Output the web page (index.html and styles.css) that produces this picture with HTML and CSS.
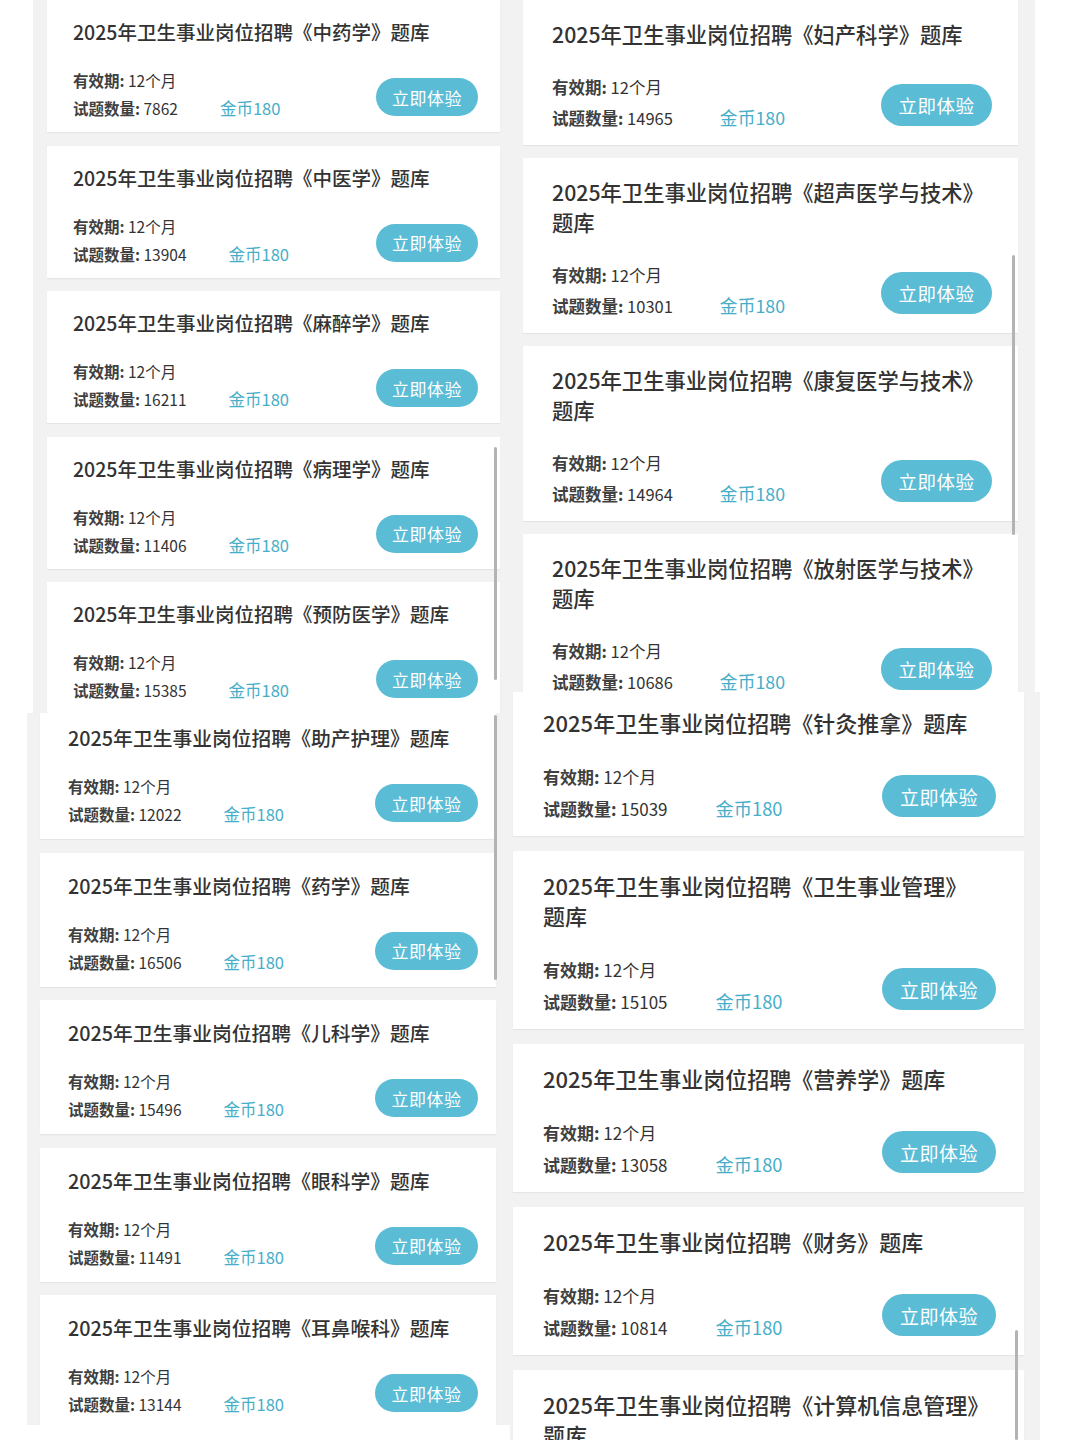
FILE: index.html
```html
<!DOCTYPE html>
<html lang="zh-CN">
<head>
<meta charset="utf-8">
<title>2025年卫生事业岗位招聘题库</title>
<link rel="stylesheet" href="styles.css">
</head>
<body>
<div class="collage">
  <div class="col col-left">
    <section class="panel panel-a">
      <div class="list">
        <div class="card">
          <div class="title">2025年卫生事业岗位招聘《中药学》<span class="keep">题库</span></div>
          <div class="body">
            <div class="meta">
              <div class="row"><span class="label">有效期:</span> 12个月</div>
              <div class="row"><span class="label">试题数量:</span> 7862<span class="coin">金币180</span></div>
            </div>
            <div class="btn">立即体验</div>
          </div>
        </div>
        <div class="card">
          <div class="title">2025年卫生事业岗位招聘《中医学》<span class="keep">题库</span></div>
          <div class="body">
            <div class="meta">
              <div class="row"><span class="label">有效期:</span> 12个月</div>
              <div class="row"><span class="label">试题数量:</span> 13904<span class="coin">金币180</span></div>
            </div>
            <div class="btn">立即体验</div>
          </div>
        </div>
        <div class="card">
          <div class="title">2025年卫生事业岗位招聘《麻醉学》<span class="keep">题库</span></div>
          <div class="body">
            <div class="meta">
              <div class="row"><span class="label">有效期:</span> 12个月</div>
              <div class="row"><span class="label">试题数量:</span> 16211<span class="coin">金币180</span></div>
            </div>
            <div class="btn">立即体验</div>
          </div>
        </div>
        <div class="card">
          <div class="title">2025年卫生事业岗位招聘《病理学》<span class="keep">题库</span></div>
          <div class="body">
            <div class="meta">
              <div class="row"><span class="label">有效期:</span> 12个月</div>
              <div class="row"><span class="label">试题数量:</span> 11406<span class="coin">金币180</span></div>
            </div>
            <div class="btn">立即体验</div>
          </div>
        </div>
        <div class="card">
          <div class="title">2025年卫生事业岗位招聘《预防医学》<span class="keep">题库</span></div>
          <div class="body">
            <div class="meta">
              <div class="row"><span class="label">有效期:</span> 12个月</div>
              <div class="row"><span class="label">试题数量:</span> 15385<span class="coin">金币180</span></div>
            </div>
            <div class="btn">立即体验</div>
          </div>
        </div>
      </div>
      <div class="scrollbar"></div>
    </section>

    <section class="panel panel-b">
      <div class="list">
        <div class="card">
          <div class="title">2025年卫生事业岗位招聘《助产护理》<span class="keep">题库</span></div>
          <div class="body">
            <div class="meta">
              <div class="row"><span class="label">有效期:</span> 12个月</div>
              <div class="row"><span class="label">试题数量:</span> 12022<span class="coin">金币180</span></div>
            </div>
            <div class="btn">立即体验</div>
          </div>
        </div>
        <div class="card">
          <div class="title">2025年卫生事业岗位招聘《药学》<span class="keep">题库</span></div>
          <div class="body">
            <div class="meta">
              <div class="row"><span class="label">有效期:</span> 12个月</div>
              <div class="row"><span class="label">试题数量:</span> 16506<span class="coin">金币180</span></div>
            </div>
            <div class="btn">立即体验</div>
          </div>
        </div>
        <div class="card">
          <div class="title">2025年卫生事业岗位招聘《儿科学》<span class="keep">题库</span></div>
          <div class="body">
            <div class="meta">
              <div class="row"><span class="label">有效期:</span> 12个月</div>
              <div class="row"><span class="label">试题数量:</span> 15496<span class="coin">金币180</span></div>
            </div>
            <div class="btn">立即体验</div>
          </div>
        </div>
        <div class="card">
          <div class="title">2025年卫生事业岗位招聘《眼科学》<span class="keep">题库</span></div>
          <div class="body">
            <div class="meta">
              <div class="row"><span class="label">有效期:</span> 12个月</div>
              <div class="row"><span class="label">试题数量:</span> 11491<span class="coin">金币180</span></div>
            </div>
            <div class="btn">立即体验</div>
          </div>
        </div>
        <div class="card">
          <div class="title">2025年卫生事业岗位招聘《耳鼻喉科》<span class="keep">题库</span></div>
          <div class="body">
            <div class="meta">
              <div class="row"><span class="label">有效期:</span> 12个月</div>
              <div class="row"><span class="label">试题数量:</span> 13144<span class="coin">金币180</span></div>
            </div>
            <div class="btn">立即体验</div>
          </div>
        </div>
      </div>
      <div class="scrollbar"></div>
    </section>
  </div>

  <div class="col col-right">
    <section class="panel panel-c">
      <div class="list">
        <div class="card">
          <div class="title">2025年卫生事业岗位招聘《妇产科学》<span class="keep">题库</span></div>
          <div class="body">
            <div class="meta">
              <div class="row"><span class="label">有效期:</span> 12个月</div>
              <div class="row"><span class="label">试题数量:</span> 14965<span class="coin">金币180</span></div>
            </div>
            <div class="btn">立即体验</div>
          </div>
        </div>
        <div class="card">
          <div class="title">2025年卫生事业岗位招聘《超声医学与技术》<span class="keep">题库</span></div>
          <div class="body">
            <div class="meta">
              <div class="row"><span class="label">有效期:</span> 12个月</div>
              <div class="row"><span class="label">试题数量:</span> 10301<span class="coin">金币180</span></div>
            </div>
            <div class="btn">立即体验</div>
          </div>
        </div>
        <div class="card">
          <div class="title">2025年卫生事业岗位招聘《康复医学与技术》<span class="keep">题库</span></div>
          <div class="body">
            <div class="meta">
              <div class="row"><span class="label">有效期:</span> 12个月</div>
              <div class="row"><span class="label">试题数量:</span> 14964<span class="coin">金币180</span></div>
            </div>
            <div class="btn">立即体验</div>
          </div>
        </div>
        <div class="card">
          <div class="title">2025年卫生事业岗位招聘《放射医学与技术》<span class="keep">题库</span></div>
          <div class="body">
            <div class="meta">
              <div class="row"><span class="label">有效期:</span> 12个月</div>
              <div class="row"><span class="label">试题数量:</span> 10686<span class="coin">金币180</span></div>
            </div>
            <div class="btn">立即体验</div>
          </div>
        </div>
      </div>
      <div class="scrollbar"></div>
    </section>

    <section class="panel panel-d">
      <div class="list">
        <div class="card">
          <div class="title">2025年卫生事业岗位招聘《针灸推拿》<span class="keep">题库</span></div>
          <div class="body">
            <div class="meta">
              <div class="row"><span class="label">有效期:</span> 12个月</div>
              <div class="row"><span class="label">试题数量:</span> 15039<span class="coin">金币180</span></div>
            </div>
            <div class="btn">立即体验</div>
          </div>
        </div>
        <div class="card">
          <div class="title">2025年卫生事业岗位招聘《卫生事业管理》<span class="keep">题库</span></div>
          <div class="body">
            <div class="meta">
              <div class="row"><span class="label">有效期:</span> 12个月</div>
              <div class="row"><span class="label">试题数量:</span> 15105<span class="coin">金币180</span></div>
            </div>
            <div class="btn">立即体验</div>
          </div>
        </div>
        <div class="card">
          <div class="title">2025年卫生事业岗位招聘《营养学》<span class="keep">题库</span></div>
          <div class="body">
            <div class="meta">
              <div class="row"><span class="label">有效期:</span> 12个月</div>
              <div class="row"><span class="label">试题数量:</span> 13058<span class="coin">金币180</span></div>
            </div>
            <div class="btn">立即体验</div>
          </div>
        </div>
        <div class="card">
          <div class="title">2025年卫生事业岗位招聘《财务》<span class="keep">题库</span></div>
          <div class="body">
            <div class="meta">
              <div class="row"><span class="label">有效期:</span> 12个月</div>
              <div class="row"><span class="label">试题数量:</span> 10814<span class="coin">金币180</span></div>
            </div>
            <div class="btn">立即体验</div>
          </div>
        </div>
        <div class="card">
          <div class="title">2025年卫生事业岗位招聘《计算机信息管理》<span class="keep">题库</span></div>
          <div class="body">
            <div class="meta">
              <div class="row"><span class="label">有效期:</span> 12个月</div>
              <div class="row"><span class="label">试题数量:</span> 12360<span class="coin">金币180</span></div>
            </div>
            <div class="btn">立即体验</div>
          </div>
        </div>
      </div>
      <div class="scrollbar"></div>
    </section>
  </div>
</div>
</body>
</html>
```

FILE: styles.css
```css
* { box-sizing: border-box; }

html, body {
  margin: 0;
  padding: 0;
  background: #ffffff;
}

body {
  font-family: "Noto Sans CJK SC", "Noto Sans", sans-serif;
  color: #333333;
}

.collage {
  width: 1080px;
  height: 1440px;
  display: flex;
  overflow: hidden;
}

.col {
  display: flex;
  flex-direction: column;
}

.col-left { width: 510px; }
.col-right { width: 570px; }

.panel {
  position: relative;
  overflow: hidden;
  background: #f2f2f2;
  flex-shrink: 0;
}

.list {
  display: flex;
  flex-direction: column;
}

.card {
  background: #ffffff;
  box-shadow: 0 1px 1px rgba(0, 0, 0, 0.05);
  padding: var(--pt) var(--pr) var(--pb) var(--pl);
}

.title {
  max-width: var(--title-w);
  font-size: var(--title-fs);
  line-height: var(--title-lh);
  font-weight: 500;
  color: #333333;
}

.keep { white-space: nowrap; }

.body {
  display: flex;
  align-items: center;
  justify-content: space-between;
  margin-top: var(--meta-gap);
}

.meta {
  display: flex;
  flex-direction: column;
}

.row {
  font-size: var(--meta-fs);
  line-height: var(--meta-lh);
  height: var(--meta-lh);
  color: #333333;
  white-space: nowrap;
}

.label {
  font-weight: 700;
  color: #404040;
}

.coin {
  margin-left: var(--coin-gap);
  font-size: var(--coin-fs);
  line-height: 1;
  color: #46aec8;
}

.btn {
  flex-shrink: 0;
  width: var(--btn-w);
  height: var(--btn-h);
  border-radius: calc(var(--btn-h) / 2);
  background: #5bbcd6;
  color: #ffffff;
  font-size: var(--btn-fs);
  display: flex;
  align-items: center;
  justify-content: center;
  margin-top: var(--btn-shift);
  letter-spacing: 0.5px;
}

.scrollbar {
  position: absolute;
  width: 3px;
  border-radius: 2px;
  background: #b3b3b3;
}

/* Panel A: top-left */
.panel-a {
  margin-left: 33px;
  width: 477px;
  height: 713px;
  padding-left: 14px;
  padding-right: 10px;
  --pt: 18px; --pr: 22px; --pb: 10px; --pl: 26px;
  --title-w: 405px;
  --title-fs: 19.5px; --title-lh: 28px;
  --meta-gap: 20px; --meta-fs: 15.5px; --meta-lh: 28px;
  --coin-fs: 16.5px; --coin-gap: 42px;
  --btn-w: 102px; --btn-h: 38px; --btn-fs: 17px; --btn-shift: 6px;
}
.panel-a .list { gap: 13.5px; }
.panel-a .scrollbar { left: 461px; top: 447px; height: 233px; }

/* Panel B: bottom-left */
.panel-b {
  margin-left: 27px;
  width: 483px;
  height: 712px;
  padding-left: 13px;
  padding-right: 14px;
  --pt: 19px; --pr: 18px; --pb: 11px; --pl: 28px;
  --title-w: 410px;
  --title-fs: 19.8px; --title-lh: 28px;
  --meta-gap: 20px; --meta-fs: 15.5px; --meta-lh: 28px;
  --coin-fs: 16.5px; --coin-gap: 42px;
  --btn-w: 103px; --btn-h: 38px; --btn-fs: 17px; --btn-shift: 6px;
}
.panel-b .list { gap: 13.5px; margin-top: -8px; }
.panel-b .scrollbar { left: 467px; top: 2px; height: 265px; }

/* Panel C: top-right */
.panel-c {
  width: 525px;
  height: 692px;
  padding-left: 13px;
  padding-right: 17px;
  --pt: 19px; --pr: 26px; --pb: 11.5px; --pl: 29px;
  --title-w: 430px;
  --title-fs: 21.3px; --title-lh: 30px;
  --meta-gap: 22.5px; --meta-fs: 16.5px; --meta-lh: 31px;
  --coin-fs: 17.8px; --coin-gap: 47px;
  --btn-w: 111px; --btn-h: 42px; --btn-fs: 18.5px; --btn-shift: 5px;
}
.panel-c .list { gap: 13px; }
.panel-c .scrollbar { left: 502px; top: 255px; height: 280px; }

/* Panel D: bottom-right */
.panel-d {
  width: 530px;
  height: 748px;
  padding-left: 3px;
  padding-right: 16px;
  --pt: 19px; --pr: 28px; --pb: 11px; --pl: 30px;
  --title-w: 452px;
  --title-fs: 22px; --title-lh: 30px;
  --meta-gap: 24px; --meta-fs: 17px; --meta-lh: 32px;
  --coin-fs: 18.3px; --coin-gap: 48px;
  --btn-w: 114px; --btn-h: 42px; --btn-fs: 19px; --btn-shift: 6px;
}
.panel-d .list { gap: 15px; margin-top: -4px; }
.panel-d .scrollbar { left: 505px; top: 638px; height: 110px; }
```
